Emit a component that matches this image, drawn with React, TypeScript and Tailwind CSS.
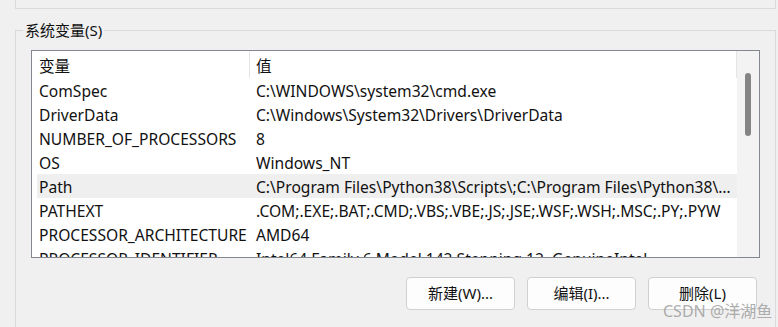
import React from 'react'

const rows: [string, string][] = [
  ['ComSpec', 'C:\\WINDOWS\\system32\\cmd.exe'],
  ['DriverData', 'C:\\Windows\\System32\\Drivers\\DriverData'],
  ['NUMBER_OF_PROCESSORS', '8'],
  ['OS', 'Windows_NT'],
  ['Path', 'C:\\Program Files\\Python38\\Scripts\\;C:\\Program Files\\Python38\\;C:\\WINDOWS\\system32'],
  ['PATHEXT', '.COM;.EXE;.BAT;.CMD;.VBS;.VBE;.JS;.JSE;.WSF;.WSH;.MSC;.PY;.PYW'],
  ['PROCESSOR_ARCHITECTURE', 'AMD64'],
  ['PROCESSOR_IDENTIFIER', 'Intel64 Family 6 Model 142 Stepping 12, GenuineIntel'],
]

export default function App() {
  return (
    <div className="w-[778px] h-[327px] overflow-hidden relative bg-[#f0f0f0] text-[15.6px] text-[#111] font-['Noto_Sans','Noto_Sans_CJK_SC',sans-serif]">
      {/* previous group box bottom edge */}
      <div className="ml-[15px] w-[761px] h-[9px] border-x border-b border-[#dadada]" />

      {/* 系统变量 group */}
      <div className="mt-[21px] ml-[15px] w-[761px] h-[400px] border-x border-t border-[#dadada]">
        <div className="-mt-[12px] ml-[7px] w-fit px-[2px] bg-[#f0f0f0] leading-[22px] text-[15px]">系统变量(S)</div>

        {/* list view */}
        <div className="mt-[9px] ml-[15px] w-[729px] h-[208px] border border-[#828790] bg-white flex overflow-hidden">
          <div className="w-[705px] pl-[5px] flex flex-col">
            <div className="flex h-[27px] shrink-0">
              <div className="w-[213px] pl-[2px] pt-[4px] border-r border-[#e5e5e5]">变量</div>
              <div className="flex-1 pl-[6px] pt-[4px] border-r border-[#e5e5e5]">值</div>
            </div>
            {rows.map(([k, v]) => (
              <div key={k} className={`flex h-[24px] shrink-0 leading-[24px] pt-[1px] ${k === 'Path' ? 'bg-[#efefef]' : ''}`}>
                <div className="w-[213px] pl-[2px] whitespace-nowrap overflow-hidden">{k}</div>
                <div className="flex-1 min-w-0 pl-[6px] pr-[6px] whitespace-nowrap overflow-hidden text-ellipsis">{v}</div>
              </div>
            ))}
          </div>
          {/* scrollbar */}
          <div className="w-[22px] bg-[#f3f3f3] pt-[22px] pl-[8px]">
            <div className="w-[6px] h-[63px] rounded-[3px] bg-[#858585]" />
          </div>
        </div>

        {/* buttons */}
        <div className="mt-[19px] ml-[390px] flex gap-[12px]">
          {['新建(W)...', '编辑(I)...', '删除(L)'].map((t) => (
            <button key={t} className="w-[109px] h-[33px] rounded-[4px] border border-[#d0d0d0] bg-[#fdfdfd] flex items-center justify-center leading-none text-[15px]">
              {t}
            </button>
          ))}
        </div>
      </div>

      {/* watermark */}
      <div className="absolute left-[663px] top-[299px] text-[16px] text-[#a3a3a3]/90 whitespace-nowrap">CSDN @洋湖鱼</div>
    </div>
  )
}
